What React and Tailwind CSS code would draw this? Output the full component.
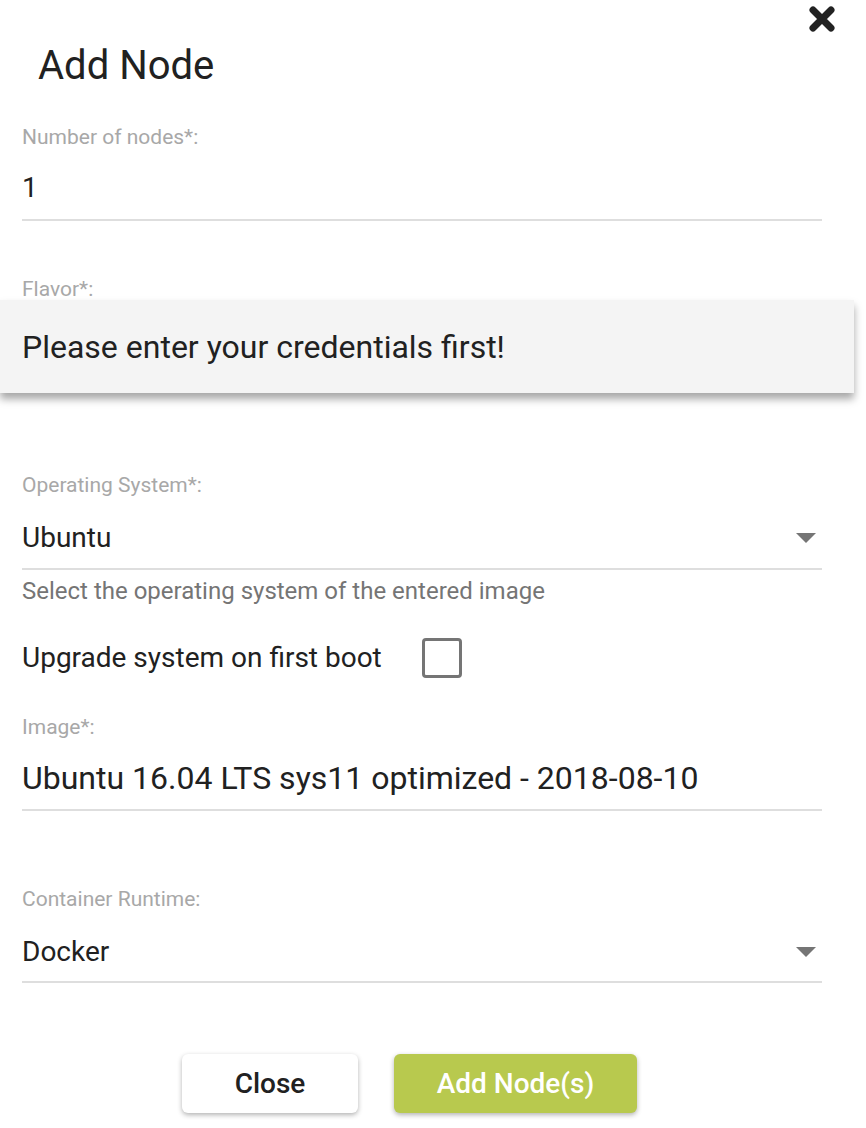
import React from 'react';

const Label = ({ children, className = '' }) => (
  <div className={`text-[21px] leading-[24px] text-[#a8a8a8] ${className}`}>{children}</div>
);

const Caret = () => (
  <svg width="20" height="10" viewBox="0 0 20 10" className="mr-[6px]">
    <path d="M0 0 L20 0 L10 10 Z" fill="#757575" />
  </svg>
);

const Underline = ({ className = '' }) => <div className={`h-[2px] bg-[#dedede] ${className}`} />;

const App = () => {
  return (
    <div className="relative w-[866px] h-[1128px] bg-white overflow-hidden" style={{ fontFamily: 'Roboto, "Noto Sans", sans-serif' }}>
      <button className="absolute top-[5px] right-[30px] w-[28px] h-[28px]">
        <svg viewBox="0 0 28 28" width="28" height="28">
          <path d="M5 5 L23 23 M23 5 L5 23" stroke="#222" strokeWidth="7" strokeLinecap="round" />
        </svg>
      </button>

      <h1 className="pt-[46px] pl-[38px] text-[40px] leading-[40px] text-[#212121]">Add Node</h1>

      <div className="px-[22px] w-[844px]">
        <Label className="mt-[39px]">Number of nodes*:</Label>
        <div className="mt-[23px] text-[28px] leading-[32px] text-[#212121]">1</div>
        <Underline className="mt-[15px]" />

        <Label className="mt-[56px]">Flavor*:</Label>
      </div>

      <div className="mt-[-1px] w-[854px] h-[93px] bg-[#f4f4f4] flex items-center pl-[22px] shadow-[0_6px_8px_rgba(0,0,0,0.35)]">
        <span className="text-[32px] text-[#212121]">Please enter your credentials first!</span>
      </div>

      <div className="px-[22px] w-[844px]">
        <Label className="mt-[80px]">Operating System*:</Label>
        <div className="mt-[25px] h-[32px] flex items-center justify-between">
          <span className="text-[28px] leading-[32px] text-[#212121]">Ubuntu</span>
          <Caret />
        </div>
        <Underline className="mt-[14px]" />
        <div className="mt-[7px] text-[24px] leading-[28px] text-[#757575]">Select the operating system of the entered image</div>

        <div className="mt-[33px] flex items-center">
          <span className="text-[28px] leading-[32px] text-[#212121]">Upgrade system on first boot</span>
          <span className="ml-[40px] w-[40px] h-[40px] border-[3px] border-[#757575] rounded-[4px]" />
        </div>

        <Label className="mt-[37px]">Image*:</Label>
        <div className="mt-[21px] text-[32px] leading-[36px] text-[#212121]">Ubuntu 16.04 LTS sys11 optimized - 2018-08-10</div>
        <Underline className="mt-[13px]" />

        <Label className="mt-[76px]">Container Runtime:</Label>
        <div className="mt-[25px] h-[32px] flex items-center justify-between">
          <span className="text-[28px] leading-[32px] text-[#212121]">Docker</span>
          <Caret />
        </div>
        <Underline className="mt-[13px]" />
      </div>

      <div className="mt-[71px] flex gap-[36px] pl-[182px]">
        <button className="w-[176px] h-[59px] rounded-[6px] bg-white text-[28px] font-medium text-[#212121] shadow-[0_2px_5px_rgba(0,0,0,0.3)]">Close</button>
        <button className="w-[243px] h-[59px] rounded-[6px] bg-[#b8c94e] text-[28px] font-medium text-white shadow-[0_2px_5px_rgba(0,0,0,0.3)]">Add Node(s)</button>
      </div>
    </div>
  );
};

export default App;
